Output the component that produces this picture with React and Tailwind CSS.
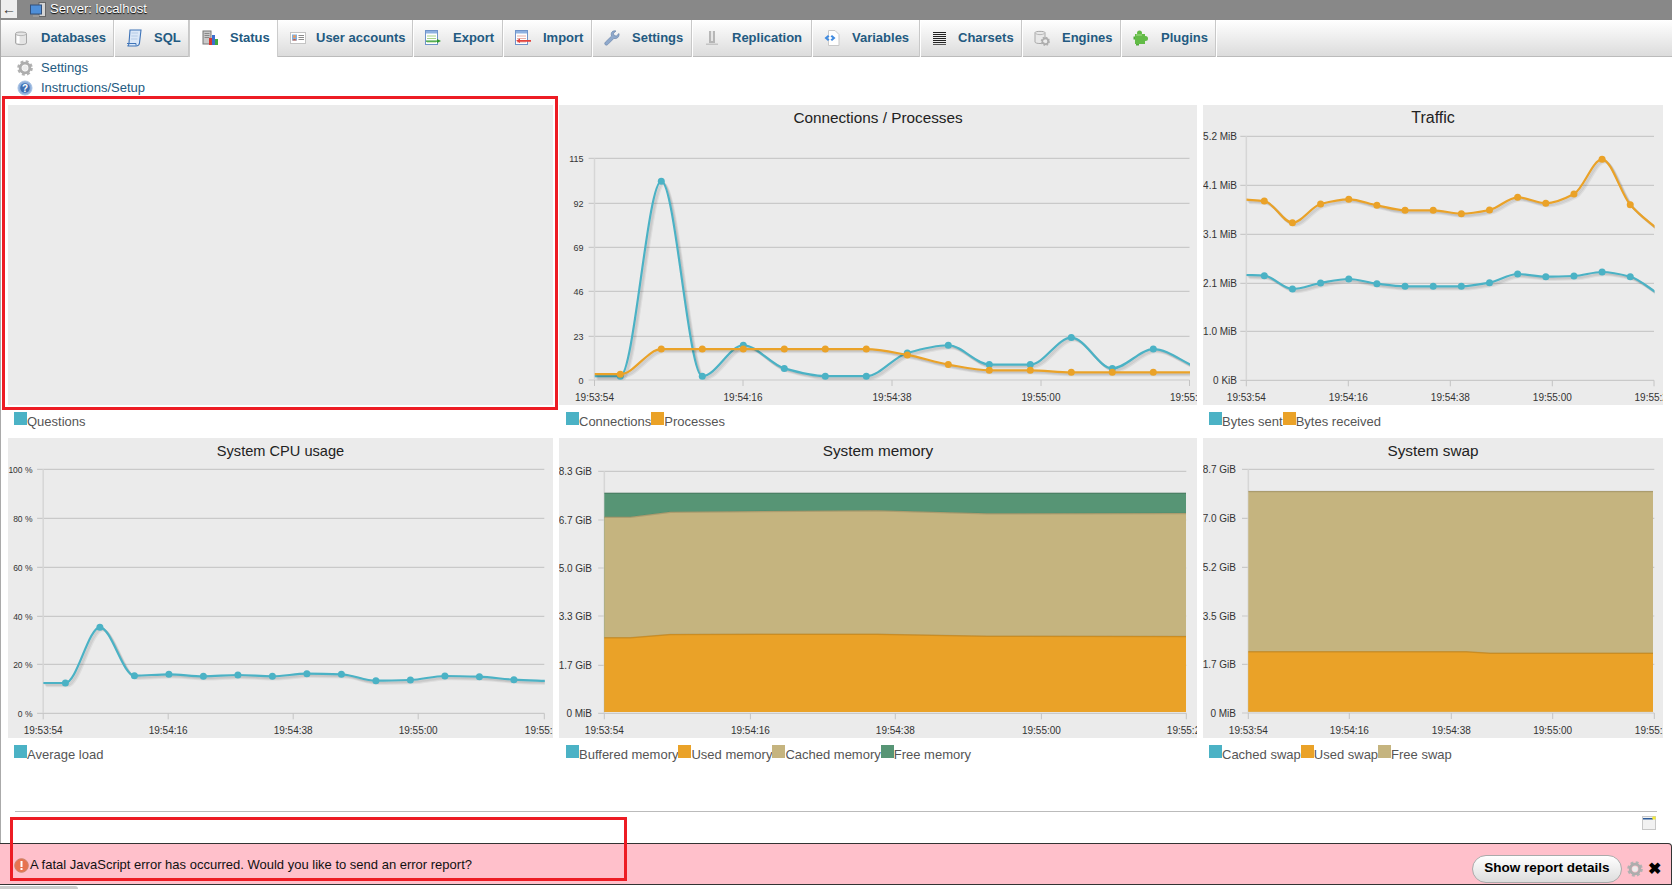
import React from 'react';

const TEAL = '#4bb2c5';
const ORANGE = '#eaa228';
const TAN = '#c5b47f';
const GREEN = '#579575';
const TIMES = ['19:53:54', '19:54:16', '19:54:38', '19:55:00', '19:55:22'];

// monotone cubic through the points, like the smoothed jqplot lines
function smoothPath(pts) {
  const n = pts.length;
  const dx = [];
  const m = [];
  for (let i = 0; i < n - 1; i++) {
    dx[i] = pts[i + 1][0] - pts[i][0];
    m[i] = (pts[i + 1][1] - pts[i][1]) / dx[i];
  }
  const t = [m[0]];
  for (let i = 1; i < n - 1; i++) {
    t[i] = m[i - 1] * m[i] <= 0 ? 0 : (2 * m[i - 1] * m[i]) / (m[i - 1] + m[i]);
  }
  t[n - 1] = m[n - 2];
  let d = `M${pts[0][0]} ${pts[0][1]}`;
  for (let i = 0; i < n - 1; i++) {
    const h = dx[i] / 3;
    d += `C${pts[i][0] + h} ${pts[i][1] + t[i] * h} ${pts[i + 1][0] - h} ${pts[i + 1][1] - t[i + 1] * h} ${pts[i + 1][0]} ${pts[i + 1][1]}`;
  }
  return d;
}

function Chart({ id, title, titleSize = 'text-[15.3px]', width, grid, ticks, gridStart, labelRight, labelSize = 10, bottom = 275, line, areas }) {
  const x0 = ticks[0];
  const x1 = ticks[ticks.length - 1];
  return (
    <div className="h-[300px] bg-[#ebebeb] overflow-hidden">
      <div className={`h-[26px] pt-[3px] text-center leading-[20px] text-[#222] ${titleSize}`}>{title}</div>
      <svg width={width} height={274} viewBox={`0 26 ${width} 274`} className="block">
        {grid.map(([y, label]) => (
          <g key={label}>
            <line x1={gridStart} x2={x1} y1={y} y2={y} stroke="#c9c9c9" strokeWidth="1.2" />
            <text x={labelRight} y={y + 3.5} textAnchor="end" fontSize={labelSize} fill="#333">{label}</text>
          </g>
        ))}
        <line x1={x0} x2={x0} y1={grid[0][0]} y2={bottom} stroke="#d6d6d6" strokeWidth="1.5" />
        {ticks.map((x, i) => (
          <g key={x}>
            <line x1={x} x2={x} y1={bottom} y2={bottom + 6} stroke="#c4c4c4" />
            <text x={x} y={bottom + 21} textAnchor="middle" fontSize="10" fill="#333">{TIMES[i]}</text>
          </g>
        ))}
        {areas && areas.bands.map((band) => {
          const edge = band.top.map((p) => p.join(' ')).join(' L');
          return (
            <g key={band.color}>
              <path d={`M${edge} L${band.top[band.top.length - 1][0]} ${areas.base} L${x0} ${areas.base}Z`} fill={band.color} />
              <path d={`M${edge}`} fill="none" stroke="#000" strokeOpacity="0.13" strokeWidth="1.5" transform="translate(0 0.5)" />
            </g>
          );
        })}
        {line && (
          <>
            <defs>
              <clipPath id={id}>
                <rect x={x0} y={0} width={x1 - x0 + 0.5} height={300} />
              </clipPath>
            </defs>
            <g clipPath={`url(#${id})`}>
              {line.series.map((s) => {
                const pts = s.ys.map((y, i) => [i === 0 ? x0 : line.first + line.step * (i - 1), y]);
                const d = smoothPath(pts);
                return (
                  <g key={s.color}>
                    <path d={d} fill="none" stroke="#000" strokeOpacity="0.07" strokeWidth="2.5" transform="translate(1 1)" />
                    <path d={d} fill="none" stroke="#000" strokeOpacity="0.07" strokeWidth="2.5" transform="translate(2 2)" />
                    <path d={d} fill="none" stroke="#000" strokeOpacity="0.06" strokeWidth="2.5" transform="translate(3 3)" />
                    <path d={d} fill="none" stroke={s.color} strokeWidth="2.2" />
                    {pts.slice(1).map(([x, y]) => (
                      <circle key={x} cx={x} cy={y} r="3.5" fill={s.color} />
                    ))}
                  </g>
                );
              })}
            </g>
          </>
        )}
      </svg>
    </div>
  );
}

function Legend({ items, pad = 'pl-[6px]' }) {
  return (
    <div className={`flex h-[33px] pt-[7px] text-[13px] leading-[15px] text-[#555] ${pad}`}>
      {items.map(([color, label]) => (
        <React.Fragment key={label}>
          <span className="block w-[13px] h-[13px]" style={{ background: color }} />
          <span className="mt-[2px]">{label}</span>
        </React.Fragment>
      ))}
    </div>
  );
}

const conn = (v) => 275 - v * 1.93;

const connectionsChart = {
  id: 'c-conn',
  title: 'Connections / Processes',
  width: 638,
  grid: [[53.3, '115'], [98.3, '92'], [142.3, '69'], [186.3, '46'], [231.3, '23'], [275, '0']],
  ticks: [35.5, 184, 333, 482, 630.5],
  gridStart: 29.6,
  labelRight: 24.5,
  labelSize: 9,
  line: {
    first: 61.3,
    step: 41,
    series: [
      { color: TEAL, ys: [2, 2, 103, 2, 18, 6, 2, 2, 14, 18, 8, 8, 22, 6, 16, 7].map(conn) },
      { color: ORANGE, ys: [3, 3, 16, 16, 16, 16, 16, 16, 13, 8, 5, 5, 4, 4, 4, 4].map(conn) },
    ],
  },
};

const trafficChart = {
  id: 'c-traffic',
  title: 'Traffic',
  titleSize: 'text-[16px]',
  width: 460,
  grid: [[31.3, '5.2 MiB'], [80.3, '4.1 MiB'], [129.3, '3.1 MiB'], [178.3, '2.1 MiB'], [226.3, '1.0 MiB'], [275.3, '0 KiB']],
  ticks: [43.3, 145.3, 247.3, 349.3, 451],
  gridStart: 37.3,
  labelRight: 34,
  bottom: 275.3,
  line: {
    first: 61.3,
    step: 28.15,
    series: [
      { color: TEAL, ys: [170, 170.7, 184, 178, 174, 178.7, 181.3, 181.3, 181.3, 177.7, 169, 171.7, 171, 167, 171.7, 189] },
      { color: ORANGE, ys: [94.7, 96, 117.7, 99, 94.3, 100.3, 105.3, 105.3, 108.7, 105, 92.3, 98.3, 89, 54.3, 99.7, 125] },
    ],
  },
};

const cpuChart = {
  id: 'c-cpu',
  title: 'System CPU usage',
  titleSize: 'text-[14.6px]',
  width: 545,
  grid: [[31.3, '100 %'], [80.3, '80 %'], [129.3, '60 %'], [178.3, '40 %'], [226.3, '20 %'], [275.3, '0 %']],
  ticks: [35.2, 160.2, 285.2, 410.2, 536.3],
  gridStart: 29.1,
  labelRight: 24.5,
  labelSize: 8.5,
  bottom: 275.3,
  line: {
    first: 57.4,
    step: 34.5,
    series: [
      { color: TEAL, ys: [245, 245, 189.3, 237.7, 236.3, 238.3, 237, 238.3, 235.7, 236.3, 242.7, 242, 238, 238.7, 241.7, 243] },
    ],
  },
};

const memoryChart = {
  id: 'c-mem',
  title: 'System memory',
  width: 638,
  grid: [[33.3, '8.3 GiB'], [82, '6.7 GiB'], [130, '5.0 GiB'], [178, '3.3 GiB'], [227.3, '1.7 GiB'], [275.3, '0 MiB']],
  ticks: [45.3, 191.4, 336.3, 482.4, 627.3],
  gridStart: 39.2,
  labelRight: 33,
  bottom: 275.3,
  areas: {
    base: 274,
    bands: [
      { color: GREEN, top: [[45.3, 54.7], [627, 54.7]] },
      { color: TAN, top: [[45.3, 78.7], [71.4, 78.7], [111.4, 73.7], [317.5, 72.3], [427.7, 75.3], [627, 75]] },
      { color: ORANGE, top: [[45.3, 199.3], [71.4, 199.3], [111.4, 196], [317.5, 195.7], [427.7, 197.7], [627, 198]] },
    ],
  },
};

const swapChart = {
  id: 'c-swap',
  title: 'System swap',
  width: 460,
  grid: [[31.3, '8.7 GiB'], [80.3, '7.0 GiB'], [129.3, '5.2 GiB'], [178, '3.5 GiB'], [226.3, '1.7 GiB'], [275, '0 MiB']],
  ticks: [45.3, 146.3, 248.3, 349.7, 451.3],
  gridStart: 39,
  labelRight: 33,
  areas: {
    base: 273.7,
    bands: [
      { color: TAN, top: [[45.3, 53], [450, 53]] },
      { color: ORANGE, top: [[45.3, 213.3], [263, 213.3], [287, 214.7], [450, 214.7]] },
    ],
  },
};

// --- tab icons, all on a 16px box ---
const DbIcon = () => (
  <svg width="16" height="16" viewBox="0 0 16 16">
    <path d="M2.5 3.5C2.5 1.5 13.5 1.5 13.5 3.5V13C13.5 15.2 2.5 15.2 2.5 13Z" fill="#e4e4e4" stroke="#a8a8a8" />
    <path d="M3 4.5C5 6 11 6 13 4.5" fill="none" stroke="#b8b8b8" />
    <rect x="4" y="6" width="2.5" height="7" fill="#fff" />
  </svg>
);
const SqlIcon = () => (
  <svg width="16" height="18" viewBox="0 0 16 18">
    <path d="M4 1H15L13.5 14C13.3 16 12 17 10 17H1.5C3 16.5 3 15 3 14Z" fill="#dbe8f8" stroke="#3f74b8" strokeWidth="1.1" />
    <path d="M1 14.5H10V16.5" fill="none" stroke="#3f74b8" />
    <path d="M5.5 4H12M5.3 7H11.7M5 10H11.4" stroke="#b5cbe6" />
  </svg>
);
const StatusIcon = () => (
  <svg width="16" height="16" viewBox="0 0 16 16">
    <rect x="1" y="1" width="8" height="13" fill="#c9c9c9" stroke="#777" />
    <path d="M2.5 3.5H7.5M2.5 5.5H7.5M2.5 7.5H7.5" stroke="#888" />
    <rect x="7" y="8" width="3" height="7" fill="#d8372f" />
    <rect x="10" y="5" width="3" height="10" fill="#3d6fd0" />
    <rect x="13" y="9" width="3" height="6" fill="#3fa83f" />
  </svg>
);
const UserIcon = () => (
  <svg width="16" height="14" viewBox="0 0 16 14">
    <rect x="0.5" y="1.5" width="15" height="11" fill="#fff" stroke="#c4c4c4" />
    <rect x="2" y="3.5" width="5" height="6" fill="#7fb0e0" />
    <circle cx="4.5" cy="5.5" r="1.5" fill="#e89a60" />
    <path d="M2.5 9.5C3 7.5 6 7.5 6.5 9.5Z" fill="#c85a40" />
    <path d="M8.5 4.5H14M8.5 6.5H14M8.5 8.5H14" stroke="#8a8a8a" />
  </svg>
);
const ExportIcon = () => (
  <svg width="16" height="16" viewBox="0 0 16 16">
    <rect x="0.5" y="0.5" width="12" height="14" fill="#fff" stroke="#6f93c9" />
    <rect x="1" y="1" width="11" height="2.5" fill="#8fb1e0" />
    <path d="M2 6H11M2 8.5H11M2 12H11" stroke="#a8d48a" />
    <path d="M1 10.5H12V9L16 11L12 13V11.7H1Z" fill="#2e9a2e" />
  </svg>
);
const ImportIcon = () => (
  <svg width="16" height="16" viewBox="0 0 16 16">
    <rect x="0.5" y="0.5" width="12" height="14" fill="#fff" stroke="#6f93c9" />
    <rect x="1" y="1" width="11" height="2.5" fill="#8fb1e0" />
    <path d="M2 6H11M2 8.5H11M2 12H11" stroke="#e8b0a8" />
    <path d="M16 10H5V8.5L1 10.8L5 13V11.7H16Z" fill="#e2423c" />
  </svg>
);
const WrenchIcon = () => (
  <svg width="16" height="16" viewBox="0 0 16 16">
    <path d="M15 3.5L12.3 6L10 5.5L9.5 3.3L12 1C9.8 0.2 7.4 1.4 7.2 3.8C7.1 4.6 7.3 5.4 7.6 6L1.3 12.2C0.5 13 0.6 14 1.2 14.6C1.9 15.3 2.9 15.3 3.7 14.6L9.9 8.4C12.6 9.3 15.7 7 15 3.5Z" fill="#8fa9cc" stroke="#5f7ca5" strokeWidth="0.6" />
  </svg>
);
const ReplicationIcon = () => (
  <svg width="16" height="16" viewBox="0 0 16 16">
    <path d="M6 1V11M10 1V11" stroke="#a9a9a9" strokeWidth="1.6" />
    <path d="M8 1V11" stroke="#e2e2e2" strokeWidth="1.4" />
    <rect x="5" y="11" width="6" height="2" fill="#b5b5b5" />
    <rect x="2" y="13.5" width="12" height="1.5" fill="#c4c4c4" />
  </svg>
);
const VariablesIcon = () => (
  <svg width="16" height="16" viewBox="0 0 16 16">
    <path d="M4.5 0.5H11L15 4.5V15.5H4.5Z" fill="#fff" stroke="#c9c9c9" />
    <path d="M4 5L0.5 8L4 11L5.5 9.5L3.5 8L5.5 6.5Z" fill="#3f8ae0" />
    <path d="M8 5L11.5 8L8 11L6.5 9.5L8.5 8L6.5 6.5Z" fill="#3f8ae0" />
  </svg>
);
const CharsetsIcon = () => (
  <svg width="14" height="14" viewBox="0 0 14 14">
    <path d="M0 1.5H13M0 3.5H13M0 5.5H13M0 7.5H13M0 9.5H13M0 11.5H13" stroke="#222" />
    <path d="M0 13.5H13" stroke="#555" />
  </svg>
);
const GearIcon = ({ size = 16 }) => (
  <svg width={size} height={size} viewBox="0 0 16 16">
    <circle cx="8" cy="8" r="6" fill="none" stroke="#b2b2b2" strokeWidth="3.6" strokeDasharray="2.6 2.1" />
    <circle cx="8" cy="8" r="4.8" fill="none" stroke="#adadad" strokeWidth="2.8" />
    <circle cx="8" cy="8" r="2.8" fill="#ececec" />
  </svg>
);
const EnginesIcon = () => (
  <svg width="16" height="16" viewBox="0 0 16 16">
    <path d="M1 2.5C1 1 11 1 11 2.5V12C11 14 1 14 1 12Z" fill="#e8e8e8" stroke="#a8a8a8" />
    <path d="M1.5 3.5C3 5 9 5 10.5 3.5" fill="none" stroke="#b8b8b8" />
    <g transform="translate(6.5 6.5) scale(0.6)">
      <GearIcon />
    </g>
  </svg>
);
const PluginsIcon = () => (
  <svg width="16" height="16" viewBox="0 0 16 16">
    <rect x="2" y="4" width="10" height="10" fill="#62bb46" />
    <circle cx="6.5" cy="3" r="2.5" fill="#62bb46" />
    <circle cx="12.5" cy="8.5" r="2.5" fill="#62bb46" />
    <path d="M2 9.5H0.5V6.5H2ZM6 15.5H3V14H6Z" fill="#4fa838" />
    <path d="M3 5H9" stroke="#a6dc8c" />
  </svg>
);

const TABS = [
  { label: 'Databases', icon: <DbIcon />, width: 'w-[113px]' },
  { label: 'SQL', icon: <SqlIcon />, width: 'w-[75px]' },
  { label: 'Status', icon: <StatusIcon />, width: 'w-[89px]', active: true },
  { label: 'User accounts', icon: <UserIcon />, width: 'w-[135px]', gap: 'gap-[10px]' },
  { label: 'Export', icon: <ExportIcon />, width: 'w-[90px]' },
  { label: 'Import', icon: <ImportIcon />, width: 'w-[89px]' },
  { label: 'Settings', icon: <WrenchIcon />, width: 'w-[100px]' },
  { label: 'Replication', icon: <ReplicationIcon />, width: 'w-[120px]' },
  { label: 'Variables', icon: <VariablesIcon />, width: 'w-[108px]' },
  { label: 'Charsets', icon: <CharsetsIcon />, width: 'w-[102px]', gap: 'gap-[10px]' },
  { label: 'Engines', icon: <EnginesIcon />, width: 'w-[99px]' },
  { label: 'Plugins', icon: <PluginsIcon />, width: 'w-[95px]' },
];

export default function App() {
  return (
    <div className="relative h-[889px] w-[1672px] overflow-hidden bg-white font-['Liberation_Sans',Arial,sans-serif] text-[13px]">
      {/* server bar */}
      <div className="flex h-5 items-start bg-[#888888] pl-px">
        <div className="flex h-[18px] w-4 items-center justify-center bg-[#eeeeee] text-[14px] leading-none text-[#333]">←</div>
        <svg width="16" height="16" viewBox="0 0 16 16" className="ml-[13px] mt-[2px]">
          <rect x="9" y="0.5" width="6.5" height="14" fill="#d4d4d4" stroke="#666" />
          <rect x="0.5" y="3" width="11" height="9" fill="#4f8fd8" stroke="#33507a" />
          <rect x="3" y="13" width="6" height="2" fill="#999" />
        </svg>
        <span className="ml-1 leading-[18px] text-white [text-shadow:0_1px_1px_#000]">Server: localhost</span>
      </div>

      <div className="h-[823px] border-l border-[#aaaaaa]">
        {/* tabs */}
        <div className="flex h-[37px] border-b border-[#bbbbbb] bg-gradient-to-b from-white to-[#dcdcdc]">
          {TABS.map((tab) => (
            <div
              key={tab.label}
              className={`flex h-[37px] shrink-0 items-center pb-[2px] pl-3 font-bold text-[#235a81] ${tab.gap || 'gap-3'} ${tab.width} ${
                tab.active ? 'border-x border-[#cccccc] bg-white' : 'border-r border-r-[#c8c8c8] shadow-[1px_0_0_#ffffff]'
              }`}
            >
              <span className="flex w-4 shrink-0 justify-center">{tab.icon}</span>
              <span className="whitespace-nowrap">{tab.label}</span>
            </div>
          ))}
        </div>

        {/* sub links */}
        <div className="h-[48px] pl-[16px] pt-px text-[#235a81]">
          <div className="flex h-5 items-center gap-2">
            <GearIcon />
            <span>Settings</span>
          </div>
          <div className="flex h-5 items-center gap-2">
            <svg width="16" height="16" viewBox="0 0 16 16">
              <circle cx="8" cy="8" r="7" fill="#8fb0dc" stroke="#a8c2e4" />
              <circle cx="8" cy="8" r="4.8" fill="#3f6fb2" />
              <text x="8" y="11.5" textAnchor="middle" fontSize="10" fontWeight="bold" fill="#fff">?</text>
            </svg>
            <span>Instructions/Setup</span>
          </div>
        </div>

        {/* charts */}
        <div className="grid grid-cols-[545px_638px_460px] gap-x-[6px] pl-[7px]">
          <div>
            <div className="h-[300px] bg-[#ebebeb]" />
            <Legend items={[[TEAL, 'Questions']]} />
          </div>
          <div>
            <Chart {...connectionsChart} />
            <Legend pad="pl-[7px]" items={[[TEAL, 'Connections'], [ORANGE, 'Processes']]} />
          </div>
          <div>
            <Chart {...trafficChart} />
            <Legend items={[[TEAL, 'Bytes sent'], [ORANGE, 'Bytes received']]} />
          </div>
          <div>
            <Chart {...cpuChart} />
            <Legend items={[[TEAL, 'Average load']]} />
          </div>
          <div>
            <Chart {...memoryChart} />
            <Legend pad="pl-[7px]" items={[[TEAL, 'Buffered memory'], [ORANGE, 'Used memory'], [TAN, 'Cached memory'], [GREEN, 'Free memory']]} />
          </div>
          <div>
            <Chart {...swapChart} />
            <Legend items={[[TEAL, 'Cached swap'], [ORANGE, 'Used swap'], [TAN, 'Free swap']]} />
          </div>
        </div>

        {/* console line */}
        <div className="ml-[14px] mr-[15px] mt-[40px] flex h-[32px] justify-end border-t border-[#bbbbbb] pr-px pt-[4px]">
          <svg width="14" height="14" viewBox="0 0 14 14">
            <rect x="0.5" y="0.5" width="13" height="13" fill="#f2f2f2" stroke="#c8c8c8" />
            <rect x="1" y="2" width="10" height="1.5" fill="#2e5c9a" />
            <circle cx="12" cy="2" r="1.8" fill="#f4ea3a" />
          </svg>
        </div>
      </div>

      {/* error report bar */}
      <div className="flex h-[42px] items-center justify-between rounded-tr-[4px] border-y border-r border-[#333333] bg-[#ffc0cb] pl-[14px] pr-[10px]">
        <div className="mt-[2px] flex items-center text-[13px] text-[#111]">
          <svg width="15" height="15" viewBox="0 0 15 15" className="mr-px shrink-0">
            <circle cx="7.5" cy="7.5" r="6.8" fill="#e8734f" stroke="#c9846a" />
            <rect x="6.5" y="3" width="2" height="6" fill="#fff" />
            <rect x="6.5" y="10" width="2" height="2" fill="#fff" />
          </svg>
          <span>A fatal JavaScript error has occurred. Would you like to send an error report?</span>
        </div>
        <div className="mt-[9px] flex items-center">
          <button className="h-[28px] w-[150px] rounded-full border border-[#aaaaaa] bg-gradient-to-b from-white to-[#dddddd] text-[13.5px] font-bold text-black">
            Show report details
          </button>
          <span className="ml-[5px]"><GearIcon /></span>
          <span className="ml-[5px] text-[16px] font-bold leading-none text-black">✖</span>
        </div>
      </div>
      <div className="mt-px h-[3px] w-[78px] rounded-tr bg-[#cccccc]" />

      {/* hand-drawn red annotations over the screenshot */}
      <div className="absolute left-[2px] top-[96px] h-[314px] w-[556px] border-[3px] border-[#ed1c24]" />
      <div className="absolute left-[10px] top-[817px] h-[64px] w-[617px] border-[3px] border-[#ed1c24]" />
    </div>
  );
}
